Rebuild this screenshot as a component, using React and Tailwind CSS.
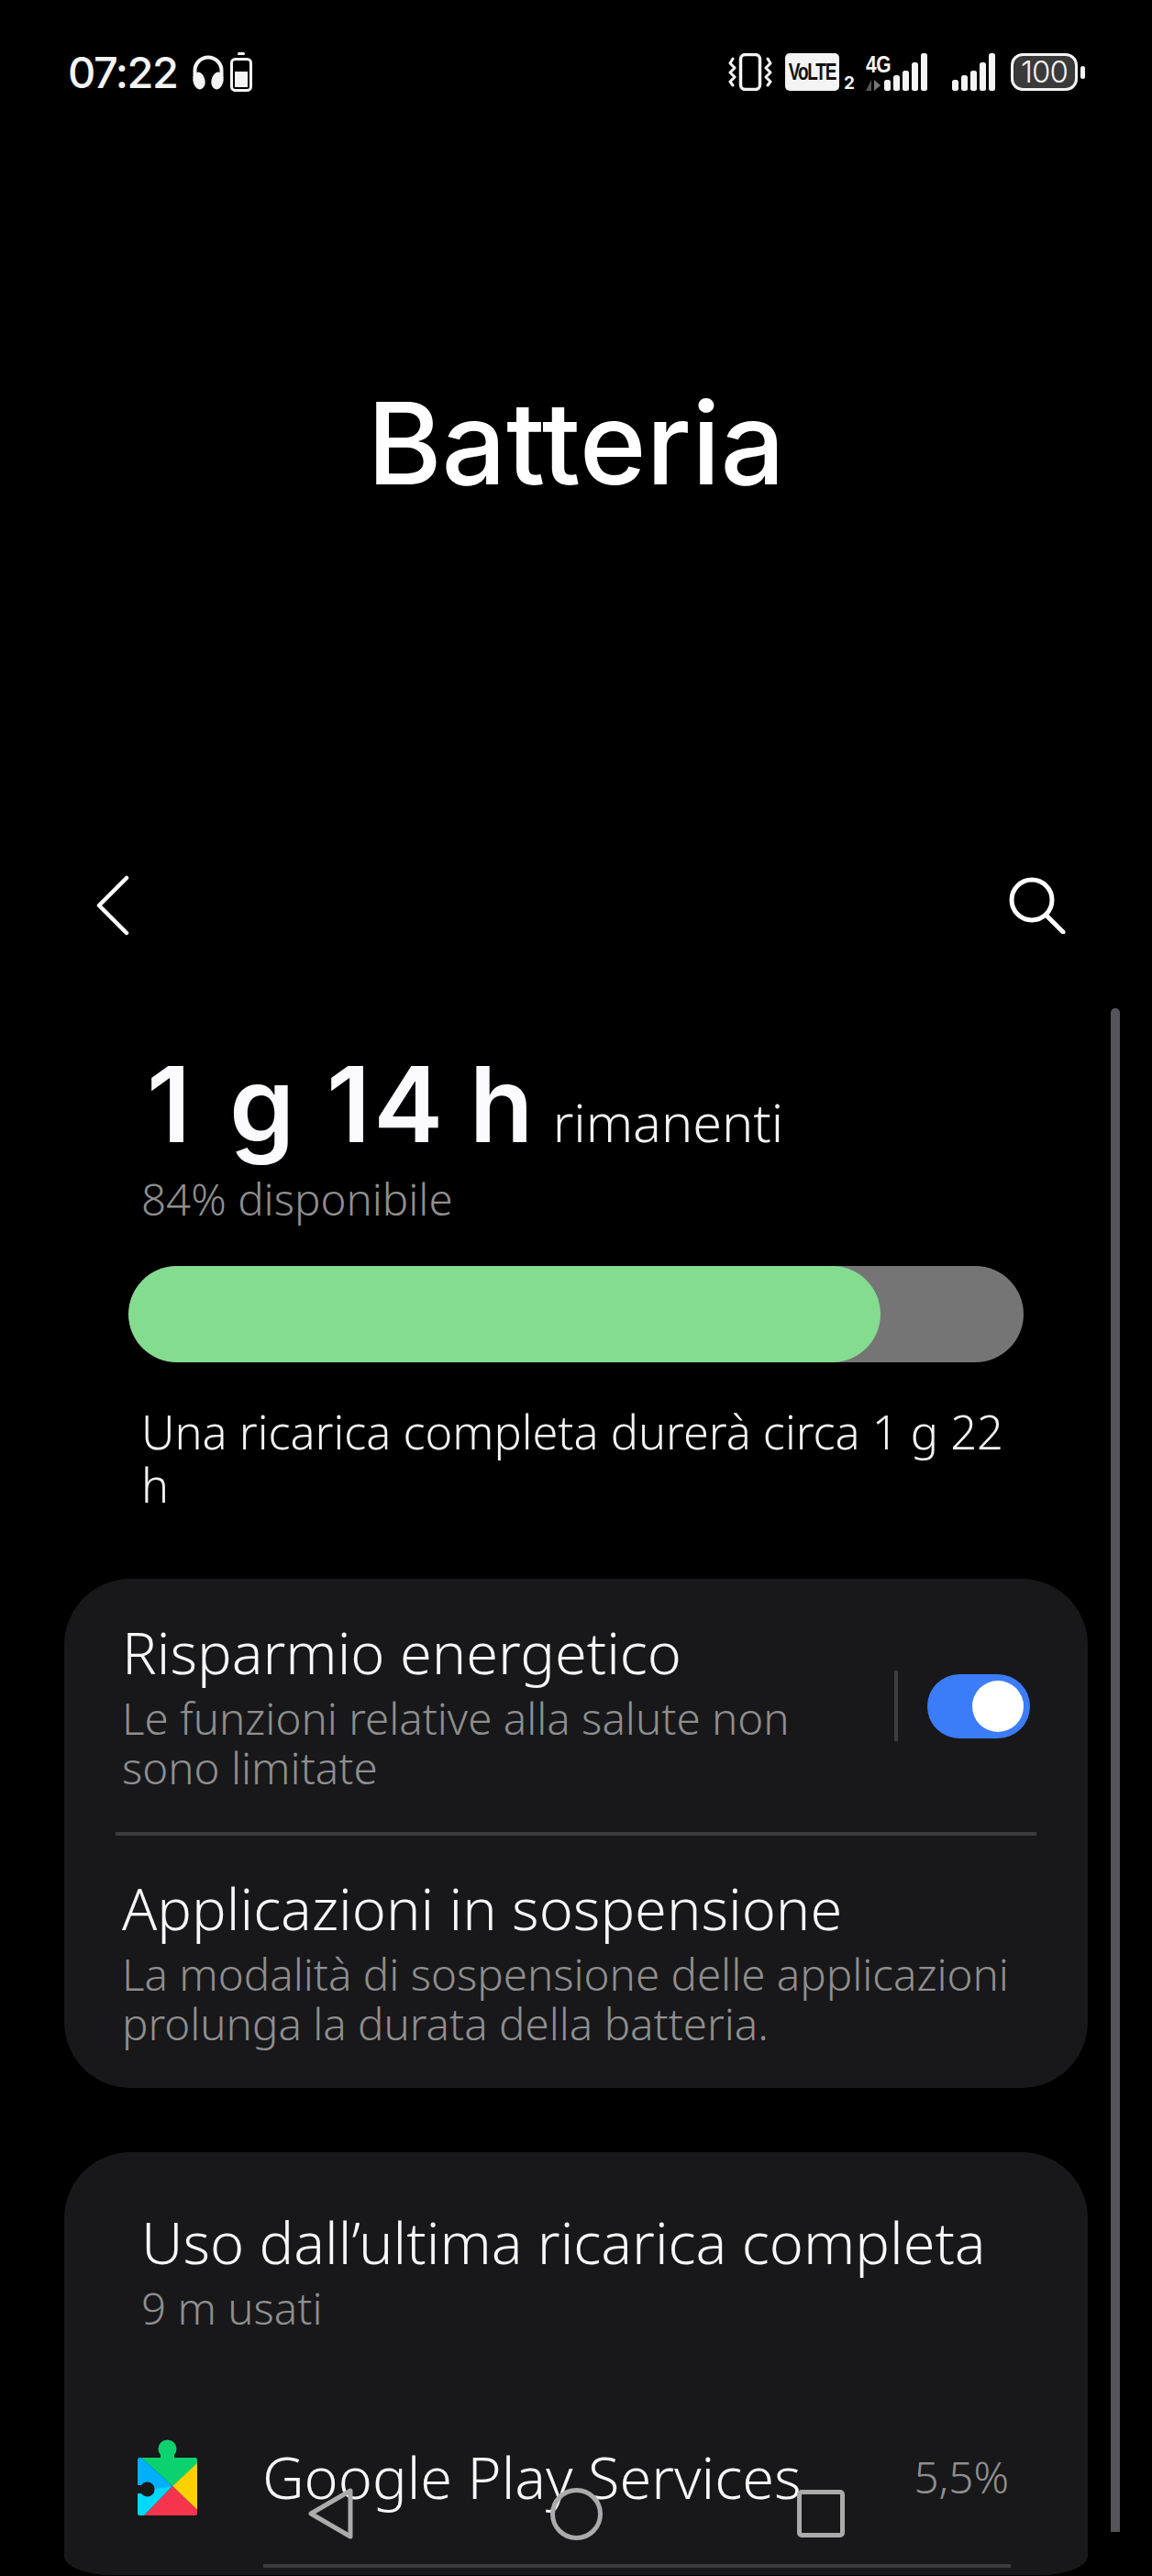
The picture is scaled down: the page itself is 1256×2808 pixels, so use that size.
import React from "react";

const font = { fontFamily: '"Noto Sans", sans-serif' };

function Bars({ className }) {
  return (
    <svg viewBox="0 0 47 41" className={className} fill="#f4f4f4">
      <rect x="0" y="29" width="7" height="12" rx="2.5" />
      <rect x="10" y="24" width="7" height="17" rx="2.5" />
      <rect x="20" y="19" width="7" height="22" rx="2.5" />
      <rect x="30" y="10" width="7" height="31" rx="2.5" />
      <rect x="40" y="0" width="7" height="41" rx="2.5" />
    </svg>
  );
}

function StatusBar() {
  return (
    <div className="flex h-[100px] items-start justify-between pt-[58px] pl-[74px] pr-[81px]">
      <div className="flex h-[41px] items-center">
        <span className="font-['Inter',sans-serif] text-[47px] leading-[41px] font-medium tracking-[-1.5px] text-[#f4f4f4]">07:22</span>
        <svg viewBox="0 0 36 39" className="ml-[16px] h-[39px] w-[36px]" fill="none">
          <path d="M3.5 26V18a14.5 14.5 0 0 1 29 0v8" stroke="#f4f4f4" strokeWidth="4" />
          <ellipse cx="8" cy="29" rx="6.5" ry="9.5" transform="rotate(-12 8 29)" fill="#f4f4f4" />
          <ellipse cx="28" cy="29" rx="6.5" ry="9.5" transform="rotate(12 28 29)" fill="#f4f4f4" />
        </svg>
        <svg viewBox="0 0 24 43" className="ml-[6px] h-[43px] w-[24px]" fill="none">
          <rect x="8" y="0" width="8" height="3" rx="1.5" fill="#f4f4f4" />
          <rect x="1.5" y="7.5" width="21" height="34" rx="4" stroke="#f4f4f4" strokeWidth="3" />
          <rect x="5" y="21" width="14" height="17" fill="#f4f4f4" />
        </svg>
      </div>
      <div className="flex items-start">
        <svg viewBox="0 0 48 41" className="h-[41px] w-[48px]" fill="none" stroke="#f4f4f4" strokeLinecap="round" strokeLinejoin="round">
          <rect x="13.5" y="1.5" width="21" height="38" rx="5" strokeWidth="3.5" />
          <path d="M5 6 2 11l5 5-5 5 5 5-5 5 3 4M43 6l3 5-5 5 5 5-5 5 5 5-3 4" strokeWidth="3" />
        </svg>
        <div className="ml-[14px] flex h-[41px] w-[59px] items-center justify-center rounded-[5px] bg-[#f4f4f4]">
          <span className="scale-y-[1.35] font-['Liberation_Sans',sans-serif] text-[19px] leading-none font-bold tracking-[-1.2px] text-[#111]">VoLTE</span>
        </div>
        <span className="ml-[5px] mt-[24px] font-['Inter',sans-serif] text-[19px] leading-[17px] font-bold text-[#f4f4f4]">2</span>
        <div className="relative ml-[12px] h-[41px] w-[67px]">
          <span className="absolute left-0 top-[1px] origin-top scale-y-[1.25] font-['Liberation_Sans',sans-serif] text-[21px] leading-[18px] font-bold tracking-[-0.5px] text-[#f4f4f4]">4G</span>
          <svg viewBox="0 0 17 12" className="absolute left-0 top-[29px] h-[12px] w-[17px]">
            <path d="M6 0v12H0z" fill="#555" />
            <path d="M9 0l7 6-7 6z" fill="#777" />
          </svg>
          <Bars className="absolute right-0 top-0 h-[41px] w-[47px]" />
        </div>
        <Bars className="ml-[27px] h-[41px] w-[47px]" />
        <div className="relative ml-[17px] flex h-[41px] w-[73px] items-center justify-center rounded-[13px] border-[3px] border-[#f4f4f4] bg-[#3a3a3a]">
          <span className="font-['Inter',sans-serif] text-[33px] leading-none tracking-[-1px] text-[#f4f4f4]">100</span>
          <span className="absolute right-[-11px] top-[11px] h-[14px] w-[5px] rounded-full bg-[#f4f4f4]" />
        </div>
      </div>
    </div>
  );
}

function Row({ title, sub }) {
  return (
    <div>
      <div className="text-[63px] leading-[72px] text-[#f7f7f7]">{title}</div>
      <div className="mt-[9px] text-[47.5px] leading-[54px] text-[#8f8f8f]">{sub}</div>
    </div>
  );
}

export default function App() {
  return (
    <div className="relative h-[2808px] w-[1256px] overflow-hidden bg-black font-light" style={font}>
      <StatusBar />
      <h1 className="mt-[313px] text-center font-['Inter',sans-serif] text-[124px] leading-[140px] font-medium text-white">Batteria</h1>
      <div className="mt-[398px] flex h-[72px] items-center justify-between pl-[105px] pr-[94px]">
        <svg viewBox="0 0 36 66" className="h-[66px] w-[36px]" fill="none" stroke="white" strokeWidth="4.5" strokeLinecap="round" strokeLinejoin="round">
          <path d="M33 3 3 33l30 30" />
        </svg>
        <svg viewBox="0 0 62 62" className="h-[62px] w-[62px]" fill="none" stroke="white" strokeWidth="5" strokeLinecap="round">
          <circle cx="25" cy="25" r="22" />
          <path d="M42 43 59 60" />
        </svg>
      </div>
      <div className="mt-[114px] pl-[160px] flex items-baseline">
        <span className="font-['Inter',sans-serif] text-[114px] leading-[134px] font-semibold tracking-[3px] text-[#fafaff]">
          1 <span className="ml-[7px]">g 14</span> <span className="ml-[-6px]">h</span>
        </span>
        <span className="ml-[18px] text-[57.5px] leading-[60px] text-[#f4f4f4]">rimanenti</span>
      </div>
      <div className="ml-[154px] mt-[9px] text-[47.5px] leading-[54px] text-[#8f8f8f]">84% disponibile</div>
      <div className="ml-[140px] mt-[46px] h-[105px] w-[976px] overflow-hidden rounded-full bg-[#757575]">
        <div className="h-full w-[820px] rounded-full bg-[#84dc8f]" />
      </div>
      <p className="ml-[154px] mt-[47px] w-[960px] text-[50.5px] leading-[58px] text-[#f4f4f4]">Una ricarica completa durerà circa 1 g 22 h</p>

      <div className="ml-[70px] mt-[73px] h-[555px] w-[1116px] rounded-[72px] bg-[#18181a] pl-[63px] pr-[65px] pt-[44px]">
        <div className="flex items-center">
          <div className="flex-1">
            <Row title="Risparmio energetico" sub="Le funzioni relative alla salute non sono limitate" />
          </div>
          <div className="ml-[48px] h-[77px] w-[4px] bg-[#3c3c3e]" />
          <div className="ml-[32px] mr-[-2px] flex h-[70px] w-[112px] items-center justify-end rounded-full bg-[#3b7cf8] pr-[7px]">
            <div className="h-[56px] w-[56px] rounded-full bg-white" />
          </div>
        </div>
        <div className="ml-[-7px] mr-[-9px] mt-[43px] h-[4px] bg-[#3c3c3e]" />
        <div className="mt-[43px]">
          <Row title="Applicazioni in sospensione" sub="La modalità di sospensione delle applicazioni prolunga la durata della batteria." />
        </div>
      </div>

      <div className="ml-[70px] mt-[70px] h-[461px] w-[1116px] rounded-t-[72px] rounded-b-[52px_21px] bg-[#18181a] pt-[62px]">
        <div className="pl-[84px] text-[63px] leading-[72px] text-[#f7f7f7]">Uso dall’ultima ricarica completa</div>
        <div className="pl-[84px] mt-[9px] text-[47.5px] leading-[54px] text-[#8f8f8f]">9 m usati</div>
        <div className="mt-[115px] flex items-center pl-[80px] pr-[86px]">
          <svg viewBox="0 0 65 84" className="h-[84px] w-[65px]">
            <path d="M4 21H25v-3a10 10 0 1 1 15 0v3H63a2 2 0 0 1 2 2v5L38 52z" fill="#0bd16f" />
            <path d="M65 27V78L38 52z" fill="#ffd000" />
            <path d="M38 52 65 78v4a2 2 0 0 1-2 2H7z" fill="#f5344e" />
            <path d="M0 23a2 2 0 0 1 2-2h2L38 52 20 56H0z" fill="#00b0ff" />
            <path d="M0 55h20l18-3L7 84H2a2 2 0 0 1-2-2z" fill="#00d8ff" />
            <path d="M0 51h4a8 8 0 1 1 0 9H0z" fill="#18181a" />
          </svg>
          <span className="ml-[71px] flex-1 text-[63px] leading-[72px] text-[#f7f7f7]">Google Play Services</span>
          <span className="text-[47.5px] leading-[54px] text-[#8f8f8f]">5,5%</span>
        </div>
        <div className="ml-[217px] mt-[53px] h-[4px] w-[815px] bg-[#3c3c3e]" />
      </div>

      {/* scrollbar + nav buttons sit over the page */}
      <div className="absolute left-[1211px] top-[1099px] h-[1661px] w-[10px] rounded-t-full rounded-br-[10px_33px] bg-[#545459]" />
      <svg viewBox="0 0 49 56" className="absolute left-[336px] top-[2712px] h-[56px] w-[49px]" fill="none" stroke="#ababab" strokeWidth="5" strokeLinejoin="round">
        <path d="M46 3v50L3 28z" />
      </svg>
      <div className="absolute left-[600px] top-[2712px] h-[57px] w-[57px] rounded-full border-[5px] border-[#ababab]" />
      <div className="absolute left-[869px] top-[2714px] h-[52px] w-[52px] rounded-[5px] border-[5px] border-[#ababab]" />
    </div>
  );
}
